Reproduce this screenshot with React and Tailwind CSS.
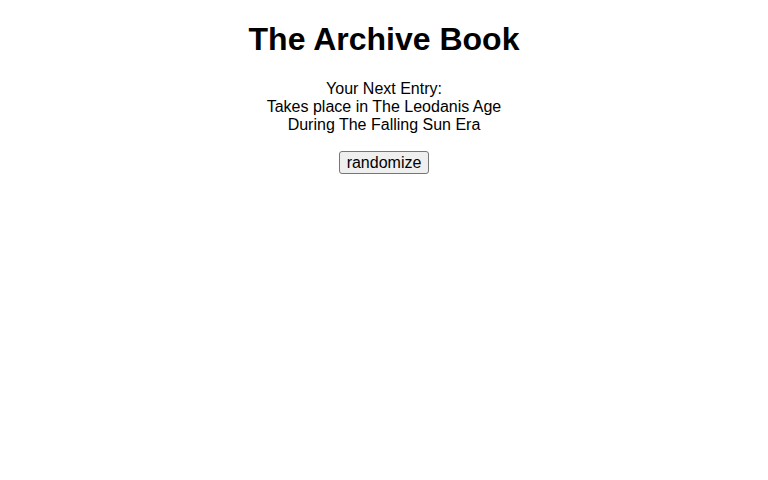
import React, { useState } from "react";

const ages = ["The Leodanis Age", "The Iron Age", "The Silver Age"];
const eras = ["The Falling Sun Era", "The Rising Moon Era", "The Quiet Era"];

const App = () => {
  const [age, setAge] = useState(ages[0]);
  const [era, setEra] = useState(eras[0]);

  const randomize = () => {
    setAge(ages[Math.floor(Math.random() * ages.length)]);
    setEra(eras[Math.floor(Math.random() * eras.length)]);
  };

  return (
    <div className="min-h-screen bg-white text-black text-center font-['Liberation_Sans',Arial,sans-serif]">
      {/* Title */}
      <h1 className="text-[32px] leading-[37px] font-bold pt-[21px] pb-[22px]">The Archive Book</h1>

      {/* Entry */}
      <p className="text-[16px] leading-[18px]">
        Your Next Entry:
        <br />
        Takes place in {age}
        <br />
        During {era}
      </p>

      {/* Button */}
      <button
        onClick={randomize}
        className="mt-[17px] text-[16px] leading-[19px] px-[7px] py-px bg-[#efefef] border border-[#767676] rounded-[3px] hover:bg-[#e5e5e5] cursor-default"
      >
        randomize
      </button>
    </div>
  );
};

export default App;
